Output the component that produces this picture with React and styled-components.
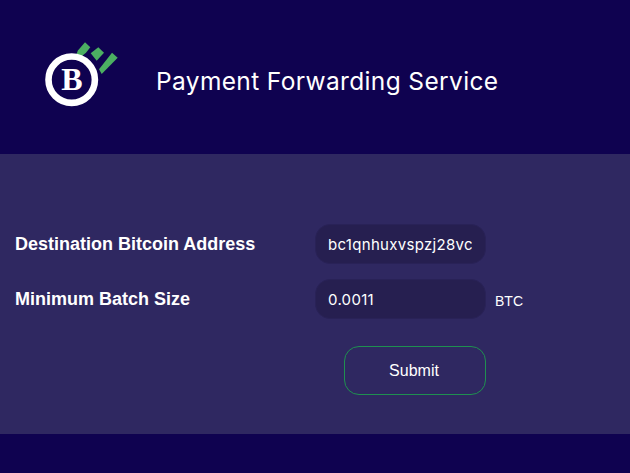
import React from 'react';
import styled, { createGlobalStyle } from 'styled-components';

const GlobalStyle = createGlobalStyle`
  html, body {
    margin: 0;
    padding: 0;
    background: #0f0250;
  }
  * {
    box-sizing: border-box;
  }
`;

function Logo() {
  return (
    <LogoWrap>
      <svg width="80" height="70" viewBox="40 42 80 70">
        <polygon points="77.7,50.7 85,42.3 90.3,47.3 86,52.7 82,56 76,56" fill="#4caf62" />
        <polygon points="90.7,53.3 98.3,47.3 104,52.7 96.7,60.7" fill="#4caf62" />
        <polygon points="99,69.3 112,52.7 117.7,57.7 101.7,74" fill="#4caf62" />
        <circle cx="71.7" cy="79.7" r="23.2" fill="#0f0250" stroke="#fff" strokeWidth="6.6" />
      </svg>
      <LogoLetter>B</LogoLetter>
    </LogoWrap>
  );
}

export default function App() {
  return (
    <>
      <GlobalStyle />
      <Page>
        <Header>
          <Logo />
          <Title>Payment Forwarding Service</Title>
        </Header>
        <Panel>
          <Row>
            <Label>Destination Bitcoin Address</Label>
            <Input defaultValue="bc1qnhuxvspzj28vc" />
          </Row>
          <Row>
            <Label>Minimum Batch Size</Label>
            <Input defaultValue="0.0011" />
            <Unit>BTC</Unit>
          </Row>
          <ButtonRow>
            <Submit>Submit</Submit>
          </ButtonRow>
        </Panel>
        <Footer />
      </Page>
    </>
  );
}

const Page = styled.div`
  width: 630px;
  height: 473px;
  overflow: hidden;
  display: flex;
  flex-direction: column;
`;

const Header = styled.header`
  height: 154px;
  background: #0f0250;
  display: flex;
  align-items: center;
  padding-left: 40px;
  color: #fff;
`;

const LogoWrap = styled.div`
  position: relative;
  width: 80px;
  height: 70px;
`;

const LogoLetter = styled.span`
  position: absolute;
  left: 21px;
  top: 22px;
  width: 22px;
  text-align: center;
  font-family: "Liberation Serif", serif;
  font-weight: 700;
  font-size: 32px;
  line-height: 30px;
  color: #fff;
`;

const Title = styled.h1`
  margin: 8px 0 0 36px;
  font-family: Inter, sans-serif;
  font-weight: 400;
  font-size: 24.5px;
  letter-spacing: 0.36px;
  line-height: 32px;
  color: #fff;
`;

const Panel = styled.main`
  height: 280px;
  background: #2f2861;
  padding: 70px 0 0 15px;
  display: flex;
  flex-direction: column;
  gap: 15px;
`;

const Row = styled.div`
  display: flex;
  align-items: center;
  height: 40px;
`;

const Label = styled.label`
  width: 300px;
  font-family: "Liberation Sans", Arial, sans-serif;
  font-weight: 700;
  font-size: 18px;
  color: #fff;
`;

const Input = styled.input`
  width: 171px;
  height: 40px;
  padding: 0 13px 0 12px;
  background: #261f50;
  border: 1px solid #292257;
  border-radius: 15px;
  outline: none;
  font-family: Inter, sans-serif;
  font-size: 15px;
  letter-spacing: 0.3px;
  color: #fff;
`;

const Unit = styled.span`
  margin-left: 9px;
  margin-top: 3px;
  font-family: "Liberation Sans", Arial, sans-serif;
  font-size: 14px;
  color: #fff;
`;

const ButtonRow = styled.div`
  display: flex;
  padding-left: 329px;
  margin-top: 12px;
`;

const Submit = styled.button`
  width: 142px;
  height: 49px;
  padding: 0 8px 0 6px;
  background: transparent;
  border: 1px solid #1f9050;
  border-radius: 15px;
  font-family: "Liberation Sans", Arial, sans-serif;
  font-size: 16px;
  color: #fff;
  cursor: pointer;
`;

const Footer = styled.footer`
  flex: 1;
  background: #0f0250;
`;
